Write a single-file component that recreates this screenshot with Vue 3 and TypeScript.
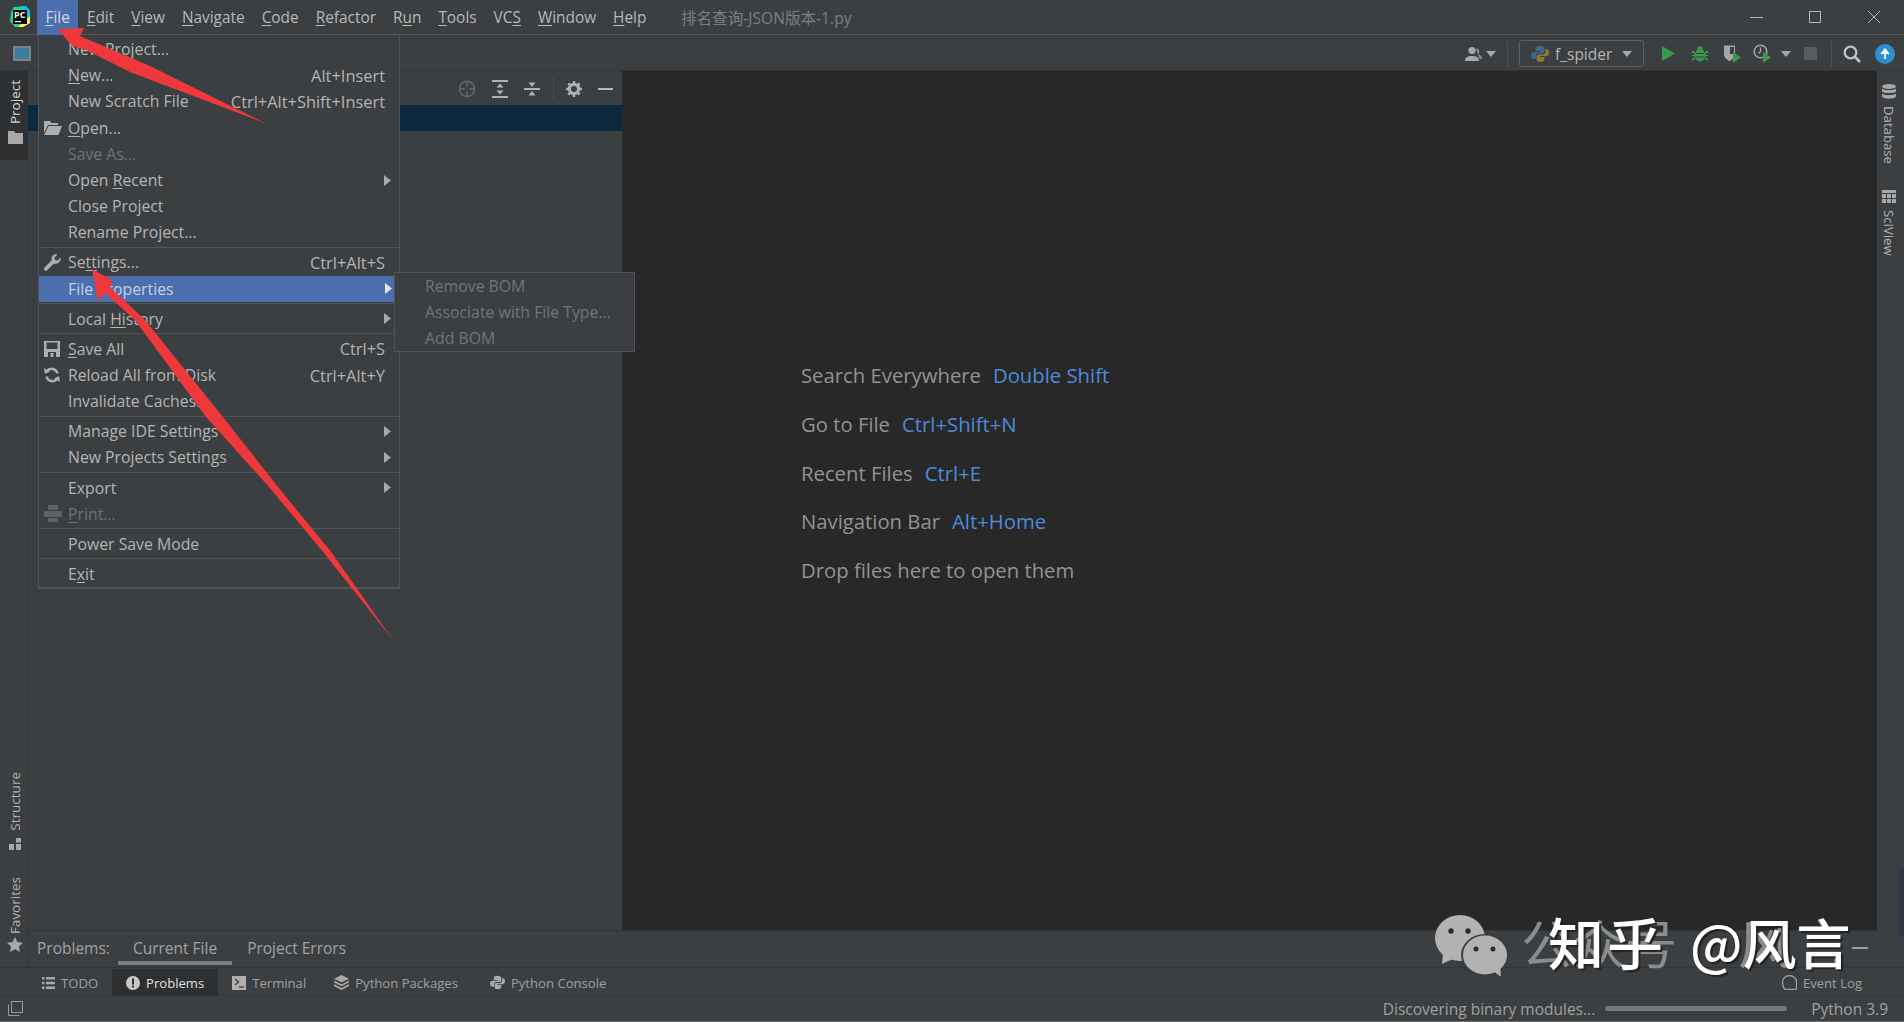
<script setup lang="ts">
interface Row { label: string; u?: [number, number]; sc?: string; icon?: string; sub?: boolean; dis?: boolean; active?: boolean }

const topMenu: { label: string; u: [number, number]; active?: boolean }[] = [
  { label: 'File', u: [0, 1], active: true },
  { label: 'Edit', u: [0, 1] },
  { label: 'View', u: [0, 1] },
  { label: 'Navigate', u: [0, 1] },
  { label: 'Code', u: [0, 1] },
  { label: 'Refactor', u: [0, 1] },
  { label: 'Run', u: [1, 1] },
  { label: 'Tools', u: [0, 1] },
  { label: 'VCS', u: [2, 1] },
  { label: 'Window', u: [0, 1] },
  { label: 'Help', u: [0, 1] },
]

const groups: Row[][] = [
  [
    { label: 'New Project...' },
    { label: 'New...', u: [0, 1], sc: 'Alt+Insert' },
    { label: 'New Scratch File', sc: 'Ctrl+Alt+Shift+Insert' },
    { label: 'Open...', u: [0, 1], icon: 'open' },
    { label: 'Save As...', dis: true },
    { label: 'Open Recent', u: [5, 1], sub: true },
    { label: 'Close Project' },
    { label: 'Rename Project...' },
  ],
  [
    { label: 'Settings...', u: [2, 2], sc: 'Ctrl+Alt+S', icon: 'wrench' },
    { label: 'File Properties', sub: true, active: true },
  ],
  [{ label: 'Local History', u: [6, 2], sub: true }],
  [
    { label: 'Save All', u: [0, 1], sc: 'Ctrl+S', icon: 'save' },
    { label: 'Reload All from Disk', sc: 'Ctrl+Alt+Y', icon: 'reload' },
    { label: 'Invalidate Caches...' },
  ],
  [
    { label: 'Manage IDE Settings', sub: true },
    { label: 'New Projects Settings', sub: true },
  ],
  [
    { label: 'Export', sub: true },
    { label: 'Print...', u: [0, 1], dis: true, icon: 'print' },
  ],
  [{ label: 'Power Save Mode' }],
  [{ label: 'Exit', u: [1, 1] }],
]

const subItems = ['Remove BOM', 'Associate with File Type...', 'Add BOM']

const hints: { text: string; key?: string }[] = [
  { text: 'Search Everywhere', key: 'Double Shift' },
  { text: 'Go to File', key: 'Ctrl+Shift+N' },
  { text: 'Recent Files', key: 'Ctrl+E' },
  { text: 'Navigation Bar', key: 'Alt+Home' },
  { text: 'Drop files here to open them' },
]

function before(r: { label: string; u?: [number, number] }): string {
  return r.u ? r.label.slice(0, r.u[0]) : r.label
}
function mn(r: { label: string; u?: [number, number] }): string {
  return r.u ? r.label.slice(r.u[0], r.u[0] + r.u[1]) : ''
}
function after(r: { label: string; u?: [number, number] }): string {
  return r.u ? r.label.slice(r.u[0] + r.u[1]) : ''
}
</script>

<template>
  <div class="app">
    <header class="title">
      <svg class="logo" viewBox="0 0 22 22" width="22" height="22">
        <path d="M5 1 L17 0 L21 5 L21 17 L14 21 L6 21 L1 15 L2 6 Z" fill="#21d789" />
        <path d="M12 0 L17 0 L21 5 L21 12 Z" fill="#07c3f2" />
        <path d="M21 10 L21 17 L14 21 L9 21 Z" fill="#fcf84a" />
        <rect x="4" y="4" width="14" height="14" fill="#000" />
        <rect x="6" y="15" width="6" height="1.2" fill="#fff" />
      </svg>
      <span class="logo-text">PC</span>
      <nav class="menubar">
        <span v-for="m in topMenu" :key="m.label" class="top-item" :class="{ on: m.active }">{{ before(m) }}<u>{{ mn(m) }}</u>{{ after(m) }}</span>
      </nav>
      <span class="doc-title">排名查询-JSON版本-1.py</span>
      <div class="winctl">
        <svg width="13" height="12" viewBox="0 0 13 12"><path d="M0 6.5h13" stroke="#b5b5b5" stroke-width="1" /></svg>
        <svg class="w-max" width="12" height="12" viewBox="0 0 12 12"><rect x=".5" y=".5" width="11" height="11" fill="none" stroke="#b5b5b5" /></svg>
        <svg class="w-close" width="12" height="12" viewBox="0 0 12 12"><path d="M0 0l12 12M12 0L0 12" stroke="#b5b5b5" stroke-width="1" /></svg>
      </div>
    </header>

    <div class="toolbar">
      <svg class="proj-ico" width="18" height="15" viewBox="0 0 18 15"><rect x="1" y="1" width="16" height="13" fill="#3a7f9e" stroke="#7f8284" stroke-width="2" /></svg>
      <div class="tb-right">
        <svg width="17" height="16" viewBox="0 0 17 16"><circle cx="7" cy="4.5" r="3.6" fill="#a8a8a8" /><path d="M0 15c0-4 3-5 7-5s7 1 7 5z" fill="#a8a8a8" /><path d="M11 2.500a3 3 0 0 1 2 5.500c2 .8 4 2 4 5h-2.500" fill="#8d8d8d" /></svg>
        <svg class="caret tb1" width="10" height="6" viewBox="0 0 10 6"><path d="M0 0h10L5 6z" /></svg>
        <span class="tb-sep tb2"></span>
        <div class="combo">
          <svg width="18" height="18" viewBox="0 0 18 18">
            <path d="M9 1c-3 0-4.500 1-4.500 3v2H9v1H2.500C1 7 0 8.500 0 10.500S1 14 2.500 14H5v-3c0-1.500 1-2.500 2.500-2.500h4c1 0 2-1 2-2V4c0-2-2-3-4.500-3z" fill="#3b6a8e" />
            <path d="M9 17c3 0 4.500-1 4.500-3v-2H9v-1h6.500c1.500 0 2.500-1.500 2.500-3.500S17 4 15.500 4H14.500v3c0 1.500-1 2.500-2.500 2.500H7.500c-1 0-2 1-2 2V14c0 2 1 3 3.500 3z" fill="#8c7b31" />
          </svg>
          <span class="combo-text">f_spider</span>
          <svg class="caret combo-caret" width="10" height="6" viewBox="0 0 10 6"><path d="M0 0h10L5 6z" /></svg>
        </div>
        <svg class="tb3" width="13" height="15" viewBox="0 0 13 15"><path d="M0 0l13 7.500L0 15z" fill="#3a9a48" /></svg>
        <svg class="tb4" width="16" height="16" viewBox="0 0 16 16"><ellipse cx="8" cy="9" rx="5" ry="6.500" fill="#3a9a48" /><circle cx="8" cy="2.800" r="2.600" fill="#3a9a48" /><path d="M0 5.500l3 1.500M16 5.500l-3 1.500M0 9.500h3M16 9.500h-3M0 14l3-2M16 14l-3-2" stroke="#3a9a48" stroke-width="1.600" /><path d="M4 7.500h8M4 11h8" stroke="#3c3f41" stroke-width="1.200" /></svg>
        <svg class="tb5" width="19" height="19" viewBox="0 0 19 19"><path d="M1 1.500h11v8c0 4-2.500 6-5.500 7.500C3.500 15.500 1 13.500 1 9.500z" fill="#a4a6a8" /><path d="M7 3h4v7H7z" fill="#3c3f41" /><path d="M10 8l8 5.500L10 19z" fill="#3a9a48" /></svg>
        <svg class="tb6" width="19" height="19" viewBox="0 0 19 19"><circle cx="7.500" cy="7.500" r="6.300" fill="none" stroke="#a4a6a8" stroke-width="1.500" /><path d="M7.500 3.500v4l-2 2" fill="none" stroke="#a4a6a8" stroke-width="1.200" /><path d="M10 8l8 5.500L10 19z" fill="#3a9a48" /></svg>
        <svg class="caret tb7" width="10" height="6" viewBox="0 0 10 6"><path d="M0 0h10L5 6z" /></svg>
        <span class="stop"></span>
        <span class="tb-sep tb8"></span>
        <svg class="tb9" width="18" height="18" viewBox="0 0 18 18"><circle cx="7.500" cy="7.500" r="5.800" fill="none" stroke="#c4c4c4" stroke-width="2.200" /><path d="M11.500 11.500L17 17" stroke="#c4c4c4" stroke-width="2.600" /></svg>
        <svg class="tb10" width="20" height="20" viewBox="0 0 20 20"><circle cx="10" cy="10" r="10" fill="#2d8fd0" /><path d="M10 15V7M6.200 10L10 5.500 13.800 10" fill="#fff" stroke="#fff" stroke-width="1.800" /></svg>
      </div>
    </div>

    <div class="middle">
      <aside class="strip-left">
        <div class="strip-top">
          <span class="vtext">Project</span>
          <svg width="15" height="13" viewBox="0 0 15 13"><path d="M0 0h6l1.500 2H15v11H0z" fill="#a8a8a8" /></svg>
        </div>
        <div class="strip-bottom">
          <span class="vtext">Structure</span>
          <svg class="s-ico" width="12" height="12" viewBox="0 0 12 12"><rect x="7" y="0" width="5" height="4.500" fill="#a8a8a8" /><rect x="0" y="6" width="5" height="6" fill="#a8a8a8" /><rect x="7" y="6" width="5" height="6" fill="#a8a8a8" /></svg>
          <span class="vtext fav">Favorites</span>
          <svg class="s-star" width="16" height="15" viewBox="0 0 16 15"><path d="M8 0l2.400 5.100 5.600.7-4.100 3.800 1.100 5.400L8 12.300 3 15l1.100-5.400L0 5.800l5.600-.7z" fill="#a8a8a8" /></svg>
        </div>
      </aside>

      <div class="center">
        <div class="upper">
          <section class="panel">
            <div class="panel-head">
              <svg width="18" height="18" viewBox="0 0 18 18"><circle cx="9" cy="9" r="7.500" fill="none" stroke="#5f6264" stroke-width="1.800" /><path d="M9 1.500v5M9 11.500v5M1.500 9h5M11.500 9h5" stroke="#5f6264" stroke-width="1.800" /></svg>
              <svg class="p1" width="16" height="18" viewBox="0 0 16 18"><path d="M0 1h16M0 17h16" stroke="#aeb0b2" stroke-width="2" /><path d="M8 3.500l3.500 4h-7zM8 14.500l-3.500-4h7z" fill="#aeb0b2" /></svg>
              <svg class="p1" width="16" height="18" viewBox="0 0 16 18"><path d="M0 9h16" stroke="#aeb0b2" stroke-width="2" /><path d="M8 7L4.500 2.500h7zM8 11l3.500 4.500h-7z" fill="#aeb0b2" /></svg>
              <span class="p-sep"></span>
              <svg class="p2" width="16" height="16" viewBox="0 0 16 16"><circle cx="8" cy="8" r="4.600" fill="none" stroke="#aeb0b2" stroke-width="3.200" /><path d="M8 0v3M8 13v3M0 8h3M13 8h3M2.300 2.300l2.100 2.100M11.600 11.600l2.100 2.100M13.700 2.300l-2.100 2.100M4.400 11.600l-2.100 2.100" stroke="#aeb0b2" stroke-width="2.400" /></svg>
              <span class="p-min"></span>
            </div>
            <div class="tree-sel"></div>
          </section>
          <main class="editor">
            <p v-for="h in hints" :key="h.text" class="hint">
              <span>{{ h.text }}</span><span v-if="h.key" class="key">{{ h.key }}</span>
            </p>
          </main>
        </div>
        <div class="problems">
          <span class="pb-label">Problems:</span>
          <span class="pb-tab cur">Current File</span>
          <span class="pb-tab">Project Errors</span>
          <span class="pb-dash"></span>
        </div>
      </div>

      <aside class="strip-right">
        <svg width="14" height="15" viewBox="0 0 14 15"><ellipse cx="7" cy="2.500" rx="7" ry="2.500" fill="#a8a8a8" /><path d="M0 4.500c2 2 12 2 14 0v3c-2 2-12 2-14 0zM0 9.500c2 2 12 2 14 0v3c-2 3-12 3-14 0z" fill="#a8a8a8" /></svg>
        <span class="vtext-r">Database</span>
        <svg class="sci" width="14" height="13" viewBox="0 0 14 13"><path d="M0 0h14v3H0zM0 4h4v4H0zM5 4h4v4H5zM10 4h4v4h-4zM0 9h4v4H0zM5 9h4v4H5zM10 9h4v4h-4z" fill="#a8a8a8" /></svg>
        <span class="vtext-r">SciView</span>
      </aside>
    </div>

    <div class="tabs">
      <span class="tab">
        <svg width="13" height="12" viewBox="0 0 13 12"><path d="M0 0h2.500v2.500H0zM4 0h9v2.500H4zM0 4.700h2.500v2.500H0zM4 4.700h9v2.500H4zM0 9.500h2.500V12H0zM4 9.500h9V12H4z" fill="#a8a8a8" /></svg>
        TODO
      </span>
      <span class="tab sel">
        <svg width="14" height="14" viewBox="0 0 14 14"><circle cx="7" cy="7" r="7" fill="#c8c8c8" /><rect x="6" y="2.500" width="2" height="6" fill="#2d2f30" /><rect x="6" y="9.500" width="2" height="2" fill="#2d2f30" /></svg>
        Problems
      </span>
      <span class="tab">
        <svg width="14" height="14" viewBox="0 0 14 14"><rect width="14" height="14" fill="#b0b0b0" /><path d="M3 3l3.500 3L3 9" fill="none" stroke="#3c3f41" stroke-width="1.400" /><path d="M7 11h5" stroke="#3c3f41" stroke-width="1.400" /></svg>
        Terminal
      </span>
      <span class="tab">
        <svg width="15" height="15" viewBox="0 0 15 15"><path d="M7.500 0L15 3.700 7.500 7.500 0 3.700z" fill="#a8a8a8" /><path d="M0 6.500l7.500 3.700L15 6.500M0 10l7.500 4L15 10" fill="none" stroke="#a8a8a8" stroke-width="1.700" /></svg>
        Python Packages
      </span>
      <span class="tab t-con">
        <svg width="15" height="15" viewBox="0 0 18 18">
          <path d="M9 1c-3 0-4.500 1-4.500 3v2H9v1H2.500C1 7 0 8.500 0 10.500S1 14 2.500 14H5v-3c0-1.500 1-2.500 2.500-2.500h4c1 0 2-1 2-2V4c0-2-2-3-4.500-3z" fill="#a8a8a8" />
          <path d="M9 17c3 0 4.500-1 4.500-3v-2H9v-1h6.500c1.500 0 2.500-1.500 2.500-3.500S17 4 15.500 4H14.500v3c0 1.500-1 2.500-2.500 2.500H7.500c-1 0-2 1-2 2V14c0 2 1 3 3.500 3z" fill="#a8a8a8" />
        </svg>
        Python Console
      </span>
      <span class="event">
        <svg width="16" height="15" viewBox="0 0 16 15"><path d="M4 14.500h11.500V7A7 6.500 0 0 0 1.500 7c0 3 1 6 2.500 7.500z" fill="none" stroke="#9a9a9a" stroke-width="1.300" /></svg>
        Event Log
      </span>
    </div>

    <footer class="status">
      <svg width="15" height="15" viewBox="0 0 15 15"><rect x="3.500" y=".5" width="11" height="11" fill="none" stroke="#9a9a9a" /><path d="M.5 3.500v11h11" fill="none" stroke="#9a9a9a" /></svg>
      <span class="st-msg">Discovering binary modules...</span>
      <span class="progress"></span>
      <span class="st-py">Python 3.9</span>
    </footer>

    <!-- File menu popup -->
    <div class="menu">
      <template v-for="(g, gi) in groups" :key="gi">
        <div v-if="gi > 0" class="sep"></div>
        <div v-for="r in g" :key="r.label" class="row" :class="{ dis: r.dis, active: r.active }">
          <span class="ico">
            <svg v-if="r.icon === 'open'" width="18" height="14" viewBox="0 0 18 14"><path d="M0 0h6l1.500 2H14v2H4L0 12z" fill="#aeaeae" /><path d="M4.500 5H18l-3.500 9H0z" fill="#aeaeae" /></svg>
            <svg v-else-if="r.icon === 'wrench'" width="17" height="17" viewBox="0 0 17 17"><path d="M16.500 3.500l-3 3-2.500-.5-.5-2.500 3-3c-3-1-6 1-6 4 0 .6.100 1.200.3 1.700L.5 13.500c-1 1-.5 2.200 0 2.700s1.700 1 2.700 0L10 9.500c3.200 1.100 7.500-2 6.500-6z" fill="#aeaeae" /></svg>
            <svg v-else-if="r.icon === 'save'" width="16" height="16" viewBox="0 0 16 16"><path d="M0 0h16v16H0z" fill="#aeaeae" /><rect x="2.500" y="1.500" width="11" height="6.500" fill="#3c3f41" /><rect x="4" y="11" width="8" height="5" fill="#3c3f41" /><rect x="6.500" y="12" width="3" height="4" fill="#aeaeae" /></svg>
            <svg v-else-if="r.icon === 'reload'" width="16" height="16" viewBox="0 0 16 16"><path d="M13.500 6.500A6 6 0 0 0 3 4" fill="none" stroke="#aeaeae" stroke-width="2.400" /><path d="M0 1l1 6 5-2.500z" fill="#aeaeae" /><path d="M2.500 9.500A6 6 0 0 0 13 12" fill="none" stroke="#aeaeae" stroke-width="2.400" /><path d="M16 15l-1-6-5 2.500z" fill="#aeaeae" /></svg>
            <svg v-else-if="r.icon === 'print'" width="18" height="17" viewBox="0 0 18 17"><rect x="4" y="0" width="10" height="5" fill="#5f6264" /><rect x="0" y="6" width="18" height="6" rx="1" fill="#5f6264" /><rect x="4" y="13" width="10" height="4" fill="#5f6264" /></svg>
          </span>
          <span class="lab">{{ before(r) }}<u>{{ mn(r) }}</u>{{ after(r) }}</span>
          <span v-if="r.sc" class="sc">{{ r.sc }}</span>
          <svg v-if="r.sub" class="arrow" width="7" height="11" viewBox="0 0 7 11"><path d="M0 0l7 5.500L0 11z" /></svg>
        </div>
      </template>
    </div>

    <div class="submenu">
      <div v-for="s in subItems" :key="s" class="sub-row">{{ s }}</div>
    </div>

    <!-- Red annotation arrows drawn on the screenshot -->
    <svg class="annot" width="1904" height="1022" viewBox="0 0 1904 1022">
      <polygon points="58,29 84,28 80,36 150,66 267,124 130,72 86,50 72,46" fill="#ee383b" />
      <polygon points="92,269 113,281 110,287 145,320 223,417 278,487 332,553 393,640 324,553 269,487 206,417 135,320 105,293 98,301" fill="#ee383b" />
    </svg>

    <div class="edge-mark"></div>

    <!-- Watermark -->
    <div class="wm">
      <svg class="wechat" width="74" height="62" viewBox="0 0 74 62">
        <ellipse cx="26" cy="24" rx="25" ry="23" fill="#b2b2b2" />
        <path d="M9 39L8 50 21 44z" fill="#b2b2b2" />
        <circle cx="17" cy="17" r="2.700" fill="#2b2b2b" />
        <circle cx="34" cy="17" r="2.700" fill="#2b2b2b" />
        <ellipse cx="51" cy="41" rx="24" ry="21" fill="#3a3c3e" />
        <ellipse cx="51" cy="41" rx="22" ry="19.500" fill="#b2b2b2" />
        <path d="M58 56l9 7-1-12z" fill="#b2b2b2" />
        <circle cx="42" cy="35" r="2.500" fill="#2b2b2b" />
        <circle cx="59" cy="35" r="2.500" fill="#2b2b2b" />
      </svg>
      <span class="wm-gray">公众号</span>
      <span class="wm-gray wm-g2">风言</span>
      <span class="wm-white"><span class="wm-w1">知乎</span><span class="wm-w2">@风言</span></span>
    </div>
  </div>
</template>

<style>
html, body { margin: 0; background: #3c3f41; }
</style>

<style scoped>
.app {
  position: relative;
  width: 1904px;
  height: 1022px;
  overflow: hidden;
  display: flex;
  flex-direction: column;
  background: #3c3f41;
  color: #b4b4b4;
  font-family: "Open Sans", "Noto Sans CJK SC", sans-serif;
  font-size: 14px;
}
u { text-underline-offset: 2px; }

.title {
  position: relative;
  flex: 0 0 35px;
  box-sizing: border-box;
  height: 35px;
  display: flex;
  align-items: center;
  padding-left: 9px;
  border-bottom: 1px solid #555759;
}
.logo { flex: none; }
.logo-text {
  position: absolute;
  left: 14px;
  top: 10px;
  font-size: 9px;
  line-height: 10px;
  font-weight: 700;
  color: #fff;
}
.menubar { display: flex; margin-left: 6px; height: 100%; }
.top-item {
  display: flex;
  align-items: center;
  padding: 0 8.5px;
  white-space: pre;
  font-size: 15.4px;
  color: #b8b8b8;
}
.top-item.on { background: #4b6eaf; height: 35px; color: #cfd6e6; }
.doc-title { margin-left: 26px; font-size: 15.6px; color: #7c7e80; }
.winctl { margin-left: auto; display: flex; align-items: center; padding-right: 24px; }
.w-max { margin-left: 46px; }
.w-close { margin-left: 47px; }

.toolbar {
  flex: 0 0 36px;
  box-sizing: border-box;
  display: flex;
  align-items: center;
  padding: 2px 0 0 13px;
  border-bottom: 1px solid #323436;
}
.proj-ico { flex: none; }
.tb-right { margin-left: auto; display: flex; align-items: center; padding-right: 9px; }
.caret path { fill: #a8a8a8; }
.tb1 { margin-left: 4px; }
.tb-sep { width: 1px; height: 26px; background: #4c4f51; }
.tb2 { margin-left: 11px; }
.combo {
  margin-left: 11px;
  box-sizing: border-box;
  width: 125px;
  height: 27px;
  display: flex;
  align-items: center;
  padding-left: 11px;
  border: 1px solid #5e6060;
  border-radius: 3px;
}
.combo-text { margin-left: 6px; font-size: 15.500px; color: #b4b4b4; }
.combo-caret { margin-left: auto; margin-right: 11px; }
.tb3 { margin-left: 18px; }
.tb4 { margin-left: 17px; }
.tb5 { margin-left: 15px; }
.tb6 { margin-left: 11px; }
.tb7 { margin-left: 9px; }
.stop { margin-left: 13px; width: 13px; height: 13px; background: #5a5c5e; }
.tb8 { margin-left: 14px; }
.tb9 { margin-left: 11px; }
.tb10 { margin-left: 14px; }

.middle { flex: 1; display: flex; min-height: 0; }
.strip-left {
  flex: 0 0 28px;
  box-sizing: border-box;
  display: flex;
  flex-direction: column;
  justify-content: space-between;
  align-items: stretch;
  border-right: 1px solid #323436;
}
.strip-top {
  height: 89px;
  box-sizing: border-box;
  background: #2e3032;
  padding: 9px 0 0 3px;
  display: flex;
  flex-direction: column;
  align-items: center;
  gap: 7px;
  color: #d8d8d8;
}
.strip-bottom {
  display: flex;
  flex-direction: column;
  align-items: center;
  padding: 0 0 15px 2px;
}
.vtext {
  writing-mode: vertical-rl;
  transform: rotate(180deg);
  font-size: 13.500px;
  line-height: 16px;
  white-space: nowrap;
}
.s-ico { margin-top: 7px; }
.s-star { margin-top: 3px; }
.fav { margin-top: 27px; }

.center { flex: 1; min-width: 0; display: flex; flex-direction: column; }
.upper { flex: 1; display: flex; min-height: 0; }
.panel { flex: 0 0 594px; display: flex; flex-direction: column; }
.panel-head {
  height: 34px;
  box-sizing: border-box;
  display: flex;
  align-items: center;
  justify-content: flex-end;
  padding: 2px 9px 0 0;
}
.p1 { margin-left: 16px; }
.p-sep { margin-left: 13px; width: 1px; height: 24px; background: #4c4f51; }
.p2 { margin-left: 12px; }
.p-min { margin-left: 16px; width: 15px; height: 2px; background: #b8babc; }
.tree-sel { height: 26px; background: #0d293e; }

.editor {
  flex: 1;
  background: #282828;
  padding: 280px 0 0 179px;
}
.hint {
  margin: 0;
  height: 48.800px;
  line-height: 48.800px;
  font-size: 20.300px;
  color: #929292;
  white-space: nowrap;
}
.key { margin-left: 12px; color: #4e8ada; }

.problems {
  flex: 0 0 37px;
  box-sizing: border-box;
  display: flex;
  align-items: center;
  border-top: 1px solid #323436;
  padding: 0 9px 2px 9px;
  font-size: 15.500px;
  position: relative;
  color: #a2a2a2;
}
.pb-tab { padding: 0 15px; height: 100%; display: flex; align-items: center; box-sizing: border-box; }
.pb-tab.cur { margin-left: 8px; border-bottom: 4px solid #7d8083; padding-top: 4px; }
.pb-dash { margin-left: auto; width: 16px; height: 2px; background: #a0a0a0; }

.strip-right {
  flex: 0 0 27px;
  box-sizing: border-box;
  display: flex;
  flex-direction: column;
  align-items: center;
  padding: 13px 3px 0 0;
  background: #3c3f41;
}
.vtext-r {
  writing-mode: vertical-rl;
  font-size: 13.200px;
  line-height: 16px;
  margin-top: 7px;
  white-space: nowrap;
}
.sci { margin-top: 26px; }

.tabs {
  flex: 0 0 28px;
  box-sizing: border-box;
  display: flex;
  align-items: stretch;
  padding: 1px 42px 0 28px;
  border-top: 1px solid #323436;
  font-size: 13.100px;
  color: #a0a0a0;
}
.tab { display: flex; align-items: center; gap: 6px; padding: 1px 14px 0; white-space: nowrap; }
.tab.sel { background: #2d2f30; color: #e0e0e0; }
.t-con { margin-left: 4px; }
.event { margin-left: auto; display: flex; align-items: center; gap: 6px; padding-top: 1px; color: #a0a0a0; }

.status {
  flex: 0 0 27px;
  box-sizing: border-box;
  display: flex;
  align-items: center;
  padding: 0 16px 0 8px;
  border-top: 1px solid #323436;
  border-bottom: 1px solid #6b6d6f;
  font-size: 15.500px;
  color: #a0a0a0;
}
.st-msg { margin-left: auto; }
.progress {
  margin-left: 10px;
  width: 182px;
  height: 5px;
  border-radius: 3px;
  background: #75787a;
}
.st-py { margin-left: 24px; }

.menu {
  position: absolute;
  left: 38px;
  top: 35px;
  width: 362px;
  box-sizing: border-box;
  padding-top: 1px;
  background: #3c3f41;
  border: 1px solid #515355;
  border-top: 0;
  border-bottom-width: 2px;
}
.row {
  height: 26.200px;
  display: flex;
  align-items: center;
  padding: 0 8px 0 5px;
  font-size: 15.800px;
  color: #b4b4b4;
  white-space: pre;
}
.row.dis { color: #6f7173; }
.row.active { background: #4b6eaf; color: #c6cfe2; margin-right: -1px; }
.ico { flex: 0 0 24px; display: flex; align-items: center; }
.lab { flex: none; }
.sc { margin-left: auto; margin-right: 6px; font-size: 16.400px; }
.arrow { margin-left: auto; }
.arrow path { fill: #a8a8a8; }
.row.active .arrow path { fill: #e6e6e6; }
.sep { height: 3.900px; display: flex; align-items: center; position: relative; }
.sep::after { content: ""; display: block; width: 100%; height: 1px; background: #515355; }

.submenu {
  position: absolute;
  left: 394px;
  top: 272px;
  width: 241px;
  height: 80px;
  box-sizing: border-box;
  padding: 0 0 0 30px;
  background: #3c3f41;
  border: 1px solid #515355;
  font-size: 15.800px;
  color: #727476;
}
.sub-row { height: 26.200px; line-height: 26.200px; white-space: nowrap; }

.annot { position: absolute; left: 0; top: 0; pointer-events: none; }
.edge-mark {
  position: absolute;
  left: 1899px;
  top: 867px;
  width: 5px;
  height: 70px;
  border-radius: 2px 0 0 2px;
  background: #33364a;
}

.wm { position: absolute; left: 0; top: 0; width: 1904px; height: 1022px; pointer-events: none; }
.wechat { position: absolute; left: 1434px; top: 914px; }
.wm-gray {
  position: absolute;
  left: 1521px;
  top: 906px;
  font-size: 52px;
  line-height: 72px;
  color: #8a8c8e;
  font-family: "Noto Sans CJK SC", sans-serif;
  white-space: nowrap;
}
.wm-g2 { left: 1738px; letter-spacing: 6px; }
.wm-white {
  position: absolute;
  left: 1548px;
  top: 903px;
  font-size: 56px;
  line-height: 76px;
  font-weight: 500;
  color: #fff;
  font-family: "Noto Sans CJK SC", sans-serif;
  text-shadow: 2px 2px 1px #222;
  white-space: pre;
}
.wm-w1 { letter-spacing: 3px; }
.wm-w2 { margin-left: 24px; font-size: 54px; }
</style>
